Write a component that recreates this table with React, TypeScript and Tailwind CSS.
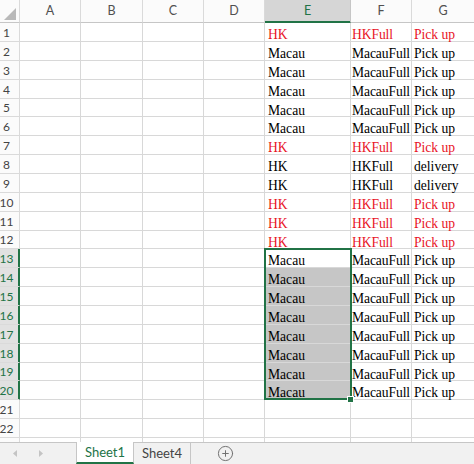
import { CirclePlus } from "lucide-react"

type RowData = { e?: string; f?: string; g?: string; red?: boolean }

const macau: RowData = { e: "Macau", f: "MacauFull", g: "Pick up" }
const hkRed: RowData = { e: "HK", f: "HKFull", g: "Pick up", red: true }
const hkDelivery: RowData = { e: "HK", f: "HKFull", g: "delivery" }

const rows: RowData[] = [
  hkRed,
  macau,
  macau,
  macau,
  macau,
  macau,
  hkRed,
  hkDelivery,
  hkDelivery,
  hkRed,
  hkRed,
  hkRed,
  macau,
  macau,
  macau,
  macau,
  macau,
  macau,
  macau,
  macau,
  {},
  {},
]

const cellText = "whitespace-nowrap overflow-x-clip pt-[4px] leading-[15px] text-[13.6px] [font-family:'Liberation_Serif',serif]"
const uiFont = "[font-family:Lato,'Open_Sans',sans-serif]"

function HeaderRow() {
  const letters = ["A", "B", "C", "D"]
  const widths = ["w-[61px]", "w-[62px]", "w-[61px]", "w-[61px]"]
  return (
    <div className={`flex h-[23px] shrink-0 bg-[#fbfbfb] text-[12.5px] text-[#505050] ${uiFont}`}>
      <div className="flex w-[20px] items-end justify-end border-b border-r border-b-[#c6c6c6] border-r-[#dadada] pb-[1px] pr-[2px]">
        <svg width="13" height="13" viewBox="0 0 13 13">
          <polygon points="12,0 12,12 0,12" fill="#b9b9b9" />
        </svg>
      </div>
      {letters.map((l, i) => (
        <div
          key={l}
          className={`${widths[i]} flex items-center justify-center border-b border-r border-b-[#c6c6c6] border-r-[#dadada]`}
        >
          {l}
        </div>
      ))}
      <div className="flex w-[86px] items-center justify-center border-b border-r border-b-[#217346] border-r-[#c6c6c6] bg-[#d6d6d6] text-[#217346] shadow-[inset_0_-1px_0_#217346]">
        E
      </div>
      <div className="flex w-[61px] items-center justify-center border-b border-r border-b-[#c6c6c6] border-r-[#dadada]">
        F
      </div>
      <div className="flex flex-1 items-center justify-center border-b border-b-[#c6c6c6]">G</div>
    </div>
  )
}

function Row({ n, data }: { n: number; data: RowData }) {
  const short = n === 5 || n === 12 || n === 19
  const selected = n >= 13 && n <= 20
  const filled = n >= 14 && n <= 20
  const color = data.red ? "text-[#e8141f]" : "text-black"
  const grid = "border-b border-r border-[#d8d8d8]"
  return (
    <div className={`flex shrink-0 ${short ? "h-[18px]" : "h-[19px]"}`}>
      <div
        className={`flex w-[20px] items-center justify-center overflow-hidden border-b border-r border-b-[#dadada] pr-[6px] pt-[1px] text-[12px] ${uiFont} ${
          selected
            ? "border-r-[#217346] bg-[#e1e1e1] text-[#217346] shadow-[inset_-1px_0_0_#217346]"
            : "border-r-[#dadada] bg-[#fbfbfb] text-[#444444]"
        }`}
      >
        {n}
      </div>
      <div className={`w-[61px] ${grid}`} />
      <div className={`w-[62px] ${grid}`} />
      <div className={`w-[61px] ${grid}`} />
      <div className={`w-[61px] ${grid}`} />
      <div className={`w-[86px] pl-[3px] ${grid} ${cellText} ${color} ${filled ? "bg-[#c6c6c6]" : ""}`}>
        {data.e}
      </div>
      <div className={`w-[61px] pl-[1px] tracking-[-0.1px] ${grid} ${cellText} ${color}`}>{data.f}</div>
      <div className={`flex-1 pl-[2px] border-b border-[#d8d8d8] ${cellText} ${color}`}>{data.g}</div>
    </div>
  )
}

function PartialRow() {
  const grid = "border-r border-[#d8d8d8]"
  return (
    <div className="flex h-[4px] shrink-0">
      <div className="w-[20px] border-r border-[#dadada] bg-[#fbfbfb]" />
      <div className={`w-[61px] ${grid}`} />
      <div className={`w-[62px] ${grid}`} />
      <div className={`w-[61px] ${grid}`} />
      <div className={`w-[61px] ${grid}`} />
      <div className={`w-[86px] ${grid}`} />
      <div className={`w-[61px] ${grid}`} />
      <div className="flex-1" />
    </div>
  )
}

function TabBar() {
  return (
    <div className={`flex h-[22px] shrink-0 items-stretch border-t border-[#c6c6c6] bg-[#f1f1f1] text-[13px] ${uiFont}`}>
      <div className="flex w-[76px] items-center gap-[22px] pl-[13px]">
        <svg width="4" height="7" viewBox="0 0 4 7">
          <polygon points="4,0 4,7 0,3.5" fill="#c4c4c4" />
        </svg>
        <svg width="4" height="7" viewBox="0 0 4 7">
          <polygon points="0,0 0,7 4,3.5" fill="#c4c4c4" />
        </svg>
      </div>
      <div className="-mt-px flex w-[58px] items-center justify-center border-x border-b-2 border-x-[#c6c6c6] border-b-[#217346] bg-white pt-[1px] text-[#217346]">
        Sheet1
      </div>
      <div className="flex w-[57px] items-center justify-center border-r border-[#c6c6c6] text-[#444444]">
        Sheet4
      </div>
      <div className="ml-[26px] flex items-center">
        <CirclePlus size={17} strokeWidth={1.4} color="#707070" />
      </div>
    </div>
  )
}

export default function App() {
  return (
    <div className="relative flex h-[464px] w-[474px] flex-col overflow-hidden bg-white">
      <HeaderRow />
      {rows.map((r, i) => (
        <Row key={i} n={i + 1} data={r} />
      ))}
      <PartialRow />
      <TabBar />
      {/* selection E13:E20 */}
      <div className="pointer-events-none absolute left-[264px] top-[248px] h-[152px] w-[88px] border-2 border-[#217346]" />
      <div className="pointer-events-none absolute left-[347px] top-[396px] h-[7px] w-[7px] border border-white bg-[#217346]" />
    </div>
  )
}
